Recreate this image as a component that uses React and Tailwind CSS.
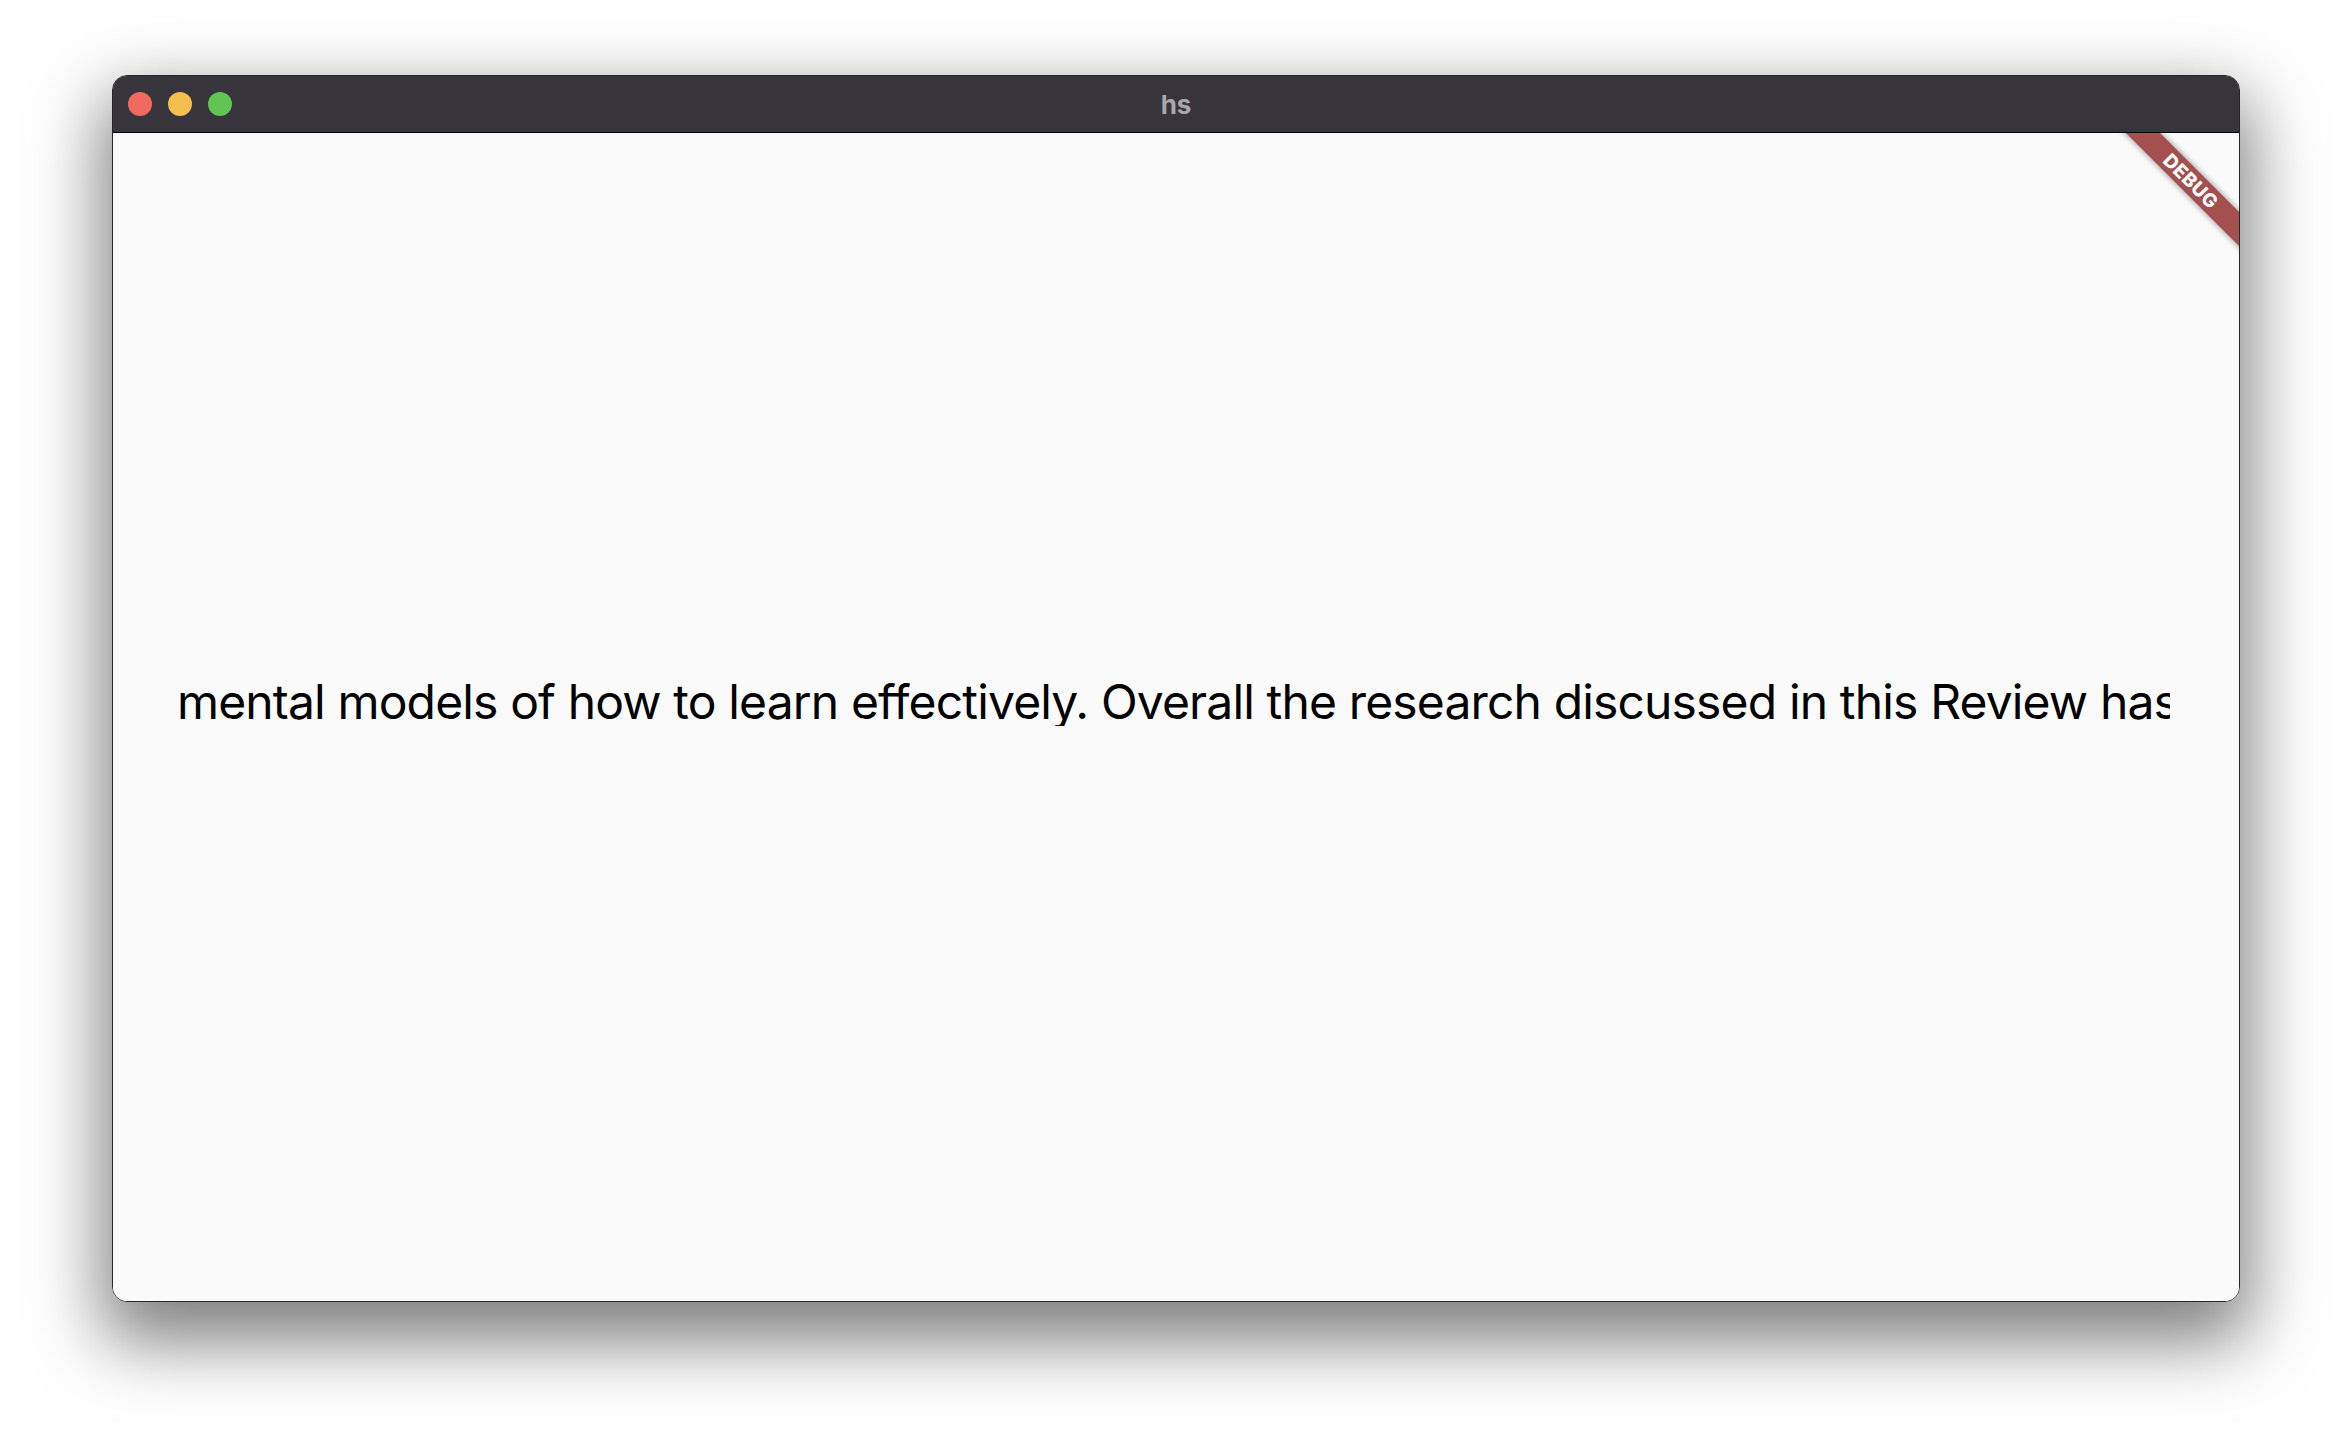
import React from "react";

const lights = ["bg-[#ee6a5f]", "bg-[#f5be4f]", "bg-[#61c554]"];

const DebugBanner = () => (
  <div className="absolute right-0 top-0 h-[150px] w-[150px] overflow-hidden pointer-events-none">
    <div className="absolute left-[2px] top-[36px] flex h-[24px] w-[200px] rotate-45 items-center justify-center bg-[#a4504e] shadow-[0_0_6px_rgba(0,0,0,0.45)]">
      <span className="text-[19px] font-extrabold leading-none tracking-[0.5px] text-white [font-family:Inter,'Noto_Sans',sans-serif]">
        DEBUG
      </span>
    </div>
  </div>
);

const App = () => {
  return (
    <div className="h-[1450px] w-full bg-white pl-[112px] pr-[112px] pt-[75px]">
      <div className="flex h-[1227px] w-[2128px] flex-col overflow-hidden rounded-[15px] border border-black/85 shadow-[0_30px_70px_10px_rgba(0,0,0,0.5)]">
        <div className="relative flex h-[57px] shrink-0 items-center gap-[16px] border-b border-black/90 bg-[#37343b] pl-[15px]">
          {lights.map((c) => (
            <div key={c} className={`h-[24px] w-[24px] rounded-full ${c}`} />
          ))}
          <div className="absolute inset-0 flex items-center justify-center">
            <span className="text-[26px] font-bold text-[#aaa6ad] [font-family:Inter,'Noto_Sans',sans-serif]">
              hs
            </span>
          </div>
        </div>
        <div className="relative flex flex-1 items-center bg-[#fafafa] pb-[31px]">
          <DebugBanner />
          <div className="ml-[64px] mr-[69px] flex-1 overflow-hidden whitespace-nowrap">
            <p className="text-[48px] leading-none tracking-[-0.85px] text-black [font-family:Inter,'Noto_Sans',sans-serif]">
              mental models of how to learn effectively. Overall the research
              discussed in this Review has important implications for
              educators and learners alike.
            </p>
          </div>
        </div>
      </div>
    </div>
  );
};

export default App;
